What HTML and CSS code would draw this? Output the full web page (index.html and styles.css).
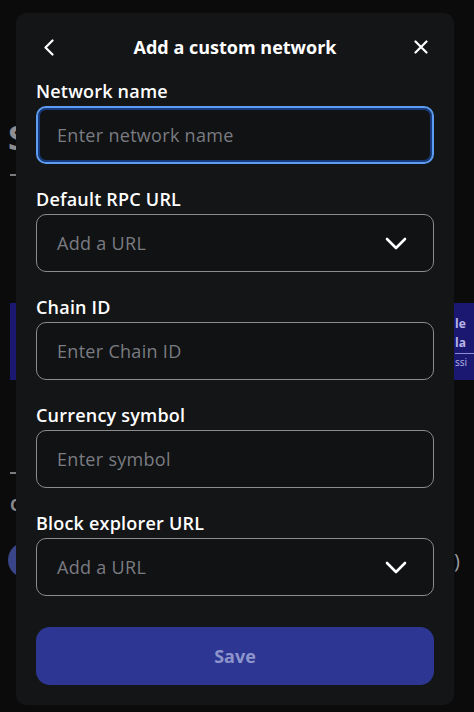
FILE: index.html
```html
<!DOCTYPE html>
<html lang="en">
<head>
<meta charset="utf-8">
<title>Add a custom network</title>
<link rel="stylesheet" href="styles.css">
</head>
<body>
<div class="page">
  <div class="bg-heading">S</div>
  <div class="bg-rule"></div>
  <div class="bg-banner">
    <div class="bg-banner-text"><span>le</span><span>la</span><span class="small">ssi</span></div>
  </div>
  <div class="bg-rule low"></div>
  <div class="bg-sub">O</div>
  <div class="bg-row"><span class="bg-dot"></span><span class="bg-end">)</span></div>
</div>

<div class="overlay">
  <div class="modal">
    <div class="modal-header">
      <button class="icon-btn" aria-label="Back">
        <svg width="12" height="17" viewBox="0 0 12 17"><path d="M9.5 1.5 L2.5 8.5 L9.5 15.5" fill="none" stroke="#fff" stroke-width="2.2" stroke-linecap="round" stroke-linejoin="round"/></svg>
      </button>
      <h1 class="modal-title">Add a custom network</h1>
      <button class="icon-btn" aria-label="Close">
        <svg width="14" height="14" viewBox="0 0 14 14"><path d="M1.5 1.5 L12.5 12.5 M12.5 1.5 L1.5 12.5" fill="none" stroke="#fff" stroke-width="2.2" stroke-linecap="round"/></svg>
      </button>
    </div>

    <div class="fields">
      <div class="field">
        <label class="label">Network name</label>
        <div class="input focused"><span class="placeholder">Enter network name</span></div>
      </div>
      <div class="field">
        <label class="label">Default RPC URL</label>
        <div class="input"><span class="placeholder">Add a URL</span>
          <svg class="chevron" width="22" height="13" viewBox="0 0 22 13"><path d="M2 2 L11 11 L20 2" fill="none" stroke="#fff" stroke-width="2.6" stroke-linecap="round" stroke-linejoin="round"/></svg>
        </div>
      </div>
      <div class="field">
        <label class="label">Chain ID</label>
        <div class="input"><span class="placeholder">Enter Chain ID</span></div>
      </div>
      <div class="field">
        <label class="label">Currency symbol</label>
        <div class="input"><span class="placeholder">Enter symbol</span></div>
      </div>
      <div class="field">
        <label class="label">Block explorer URL</label>
        <div class="input"><span class="placeholder">Add a URL</span>
          <svg class="chevron" width="22" height="13" viewBox="0 0 22 13"><path d="M2 2 L11 11 L20 2" fill="none" stroke="#fff" stroke-width="2.6" stroke-linecap="round" stroke-linejoin="round"/></svg>
        </div>
      </div>
    </div>

    <button class="save-btn">Save</button>
  </div>
</div>
</body>
</html>
```

FILE: styles.css
```css
* { box-sizing: border-box; }

html, body {
  margin: 0;
  padding: 0;
  width: 474px;
  height: 712px;
  overflow: hidden;
  background: #0b0b0c;
  font-family: "Open Sans", Lato, sans-serif;
  color: #fff;
}

body { position: relative; }

/* underlying page (dimmed) */
.page {
  padding: 116px 0 0 8px;
  display: flex;
  flex-direction: column;
  color: #8a8a8e;
}
.bg-heading {
  font-size: 34px;
  font-weight: 700;
  line-height: 42px;
  color: #8e8e92;
}
.bg-rule {
  width: 8px;
  height: 2px;
  margin-left: 2px;
  background: #7a7a7e;
  margin-top: 16px;
}
.bg-rule.low { margin-top: 92px; }
.bg-banner {
  margin-top: 127px;
  margin-left: 2px;
  height: 77px;
  background: #1b1872;
  display: flex;
  justify-content: flex-end;
  align-items: center;
}
.bg-banner-text {
  display: flex;
  flex-direction: column;
  width: 19px;
  color: #b8b6e8;
  font-size: 12px;
  font-weight: 700;
  line-height: 19px;
  white-space: nowrap;
}
.bg-banner-text .small {
  margin-top: 1px;
  padding-top: 1px;
  border-top: 1px solid #8e8ad8;
  font-size: 10px;
  font-weight: 400;
  line-height: 15px;
}
.bg-sub {
  margin-top: 20px;
  margin-left: 2px;
  font-size: 16px;
  font-weight: 700;
  color: #8a8a8e;
}
.bg-row {
  margin-top: 26px;
  display: flex;
  align-items: center;
  justify-content: space-between;
  padding-right: 14px;
}
.bg-dot {
  width: 36px;
  height: 36px;
  border-radius: 50%;
  background: #3a4488;
}
.bg-end { font-size: 20px; color: #9a9aa0; }

/* modal */
.overlay {
  position: absolute;
  inset: 0;
  padding: 13px 20px 0 16px;
}
.modal {
  width: 438px;
  height: 692px;
  background: #141517;
  border-radius: 10px;
  padding: 16px 20px 20px;
  display: flex;
  flex-direction: column;
}
.modal-header {
  height: 36px;
  display: flex;
  align-items: center;
  justify-content: space-between;
  margin-bottom: 16px;
}
.icon-btn {
  width: 26px;
  height: 26px;
  padding: 0;
  border: 0;
  background: none;
  display: flex;
  align-items: center;
  justify-content: center;
}
.modal-title {
  margin: 0;
  font-size: 18px;
  font-weight: 700;
  line-height: 24px;
  color: #fff;
}

.fields {
  display: flex;
  flex-direction: column;
  gap: 25px;
}
.field {
  display: flex;
  flex-direction: column;
}
.label {
  font-size: 18px;
  font-weight: 600;
  line-height: 20px;
  letter-spacing: 0.2px;
  margin-bottom: 5px;
  color: #fff;
}
.input {
  height: 58px;
  border: 1px solid #8b8c90;
  border-radius: 10px;
  background: #111214;
  display: flex;
  align-items: center;
  justify-content: space-between;
  padding: 0 26px 0 20px;
}
.input.focused {
  border: 2px solid #5d9cf2;
  box-shadow: inset 0 0 0 2px #163a7a;
  padding-left: 19px;
}
.placeholder {
  font-size: 18px;
  letter-spacing: 0.3px;
  color: #7a7c81;
}
.chevron { display: block; }

.save-btn {
  margin-top: 31px;
  height: 58px;
  border: 0;
  border-radius: 14px;
  background: #2d3793;
  color: #8e94cc;
  font-family: inherit;
  font-size: 18px;
  font-weight: 700;
}
```
